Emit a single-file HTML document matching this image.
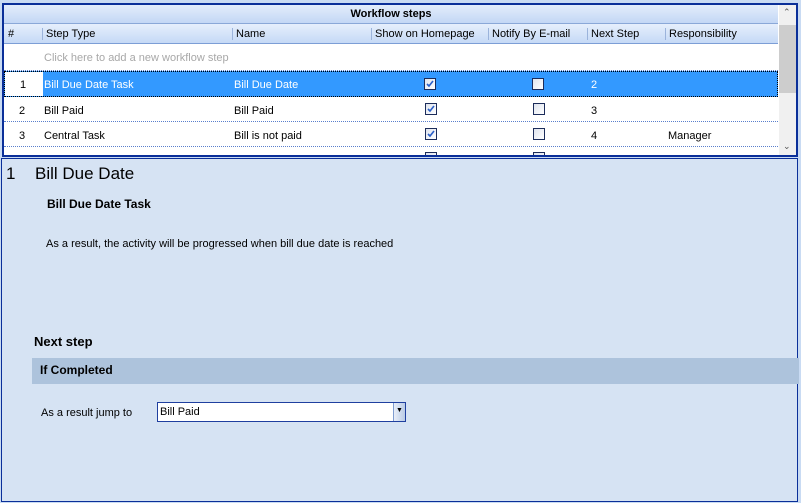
<!DOCTYPE html>
<html><head><style>
*{margin:0;padding:0;box-sizing:border-box}
body{width:801px;height:503px;background:#c9dbf3;font-family:"Liberation Sans",Arial,sans-serif;font-size:11px;color:#000;position:relative;overflow:hidden}
.a{position:absolute;white-space:nowrap}
.grid{position:absolute;left:2px;top:3px;width:796px;height:154px;border:2px solid #0a2f99;background:#fff;overflow:hidden}
.title{position:absolute;left:0;top:0;width:774px;height:19px;background:linear-gradient(#e3edfb,#c3d7f5);border-bottom:1px solid #8aa8d8;font-weight:bold;text-align:center;line-height:19px}
.hdr{position:absolute;left:0;top:19px;width:774px;height:20px;background:linear-gradient(#e6effc,#c5d9f6);border-bottom:1px solid #7c9ed6}
.hdr span{position:absolute;top:4px;padding-left:3px;border-left:1px solid #9bb3db}
.row{position:absolute;left:0;width:774px;border-bottom:1px dotted #5a7fcc}
.row span{position:absolute}
.cb{position:absolute;width:12px;height:12px;border:1px solid #1c2c5a;background:linear-gradient(135deg,#dfe4ee,#fff)}
.sb{position:absolute;left:775px;top:0;width:17px;height:150px;background:#f0f0f0}
.panel{position:absolute;left:1px;top:158px;width:797px;height:344px;border:1px solid #0a2f99;background:#d6e3f3}
</style></head><body>
<div class="grid">
 <div class="title">Workflow steps</div>
 <div class="hdr">
  <span style="left:1px;border:none">#</span>
  <span style="left:38px">Step Type</span>
  <span style="left:228px">Name</span>
  <span style="left:367px">Show on Homepage</span>
  <span style="left:484px">Notify By E-mail</span>
  <span style="left:583px">Next Step</span>
  <span style="left:661px">Responsibility</span>
 </div>
 <div class="row" style="top:40px;height:26px"><span style="left:40px;top:7px;color:#a8a8a8">Click here to add a new workflow step</span></div>
 <div class="row" style="top:66px;height:26px;background:#3399ff;border:1px dotted #000">
  <div style="position:absolute;left:0;top:0;width:38px;height:24px;background:#fff"></div>
  <span style="left:15px;top:7px">1</span>
  <span style="left:39px;top:7px;color:#fff">Bill Due Date Task</span>
  <span style="left:229px;top:7px;color:#fff">Bill Due Date</span>
  <div class="cb" style="left:419px;top:6px"><svg width="10" height="10"><path d="M2 5l2 2 4-5" stroke="#2a5fc8" stroke-width="1.6" fill="none"/></svg></div>
  <div class="cb" style="left:527px;top:6px"></div>
  <span style="left:586px;top:7px;color:#fff">2</span>
 </div>
 <div class="row" style="top:92px;height:25px">
  <span style="left:15px;top:8px">2</span><span style="left:40px;top:8px">Bill Paid</span><span style="left:230px;top:8px">Bill Paid</span>
  <div class="cb" style="left:421px;top:6px"><svg width="10" height="10"><path d="M2 5l2 2 4-5" stroke="#2a5fc8" stroke-width="1.6" fill="none"/></svg></div>
  <div class="cb" style="left:529px;top:6px"></div>
  <span style="left:587px;top:8px">3</span>
 </div>
 <div class="row" style="top:117px;height:25px">
  <span style="left:15px;top:8px">3</span><span style="left:40px;top:8px">Central Task</span><span style="left:230px;top:8px">Bill is not paid</span>
  <div class="cb" style="left:421px;top:6px"><svg width="10" height="10"><path d="M2 5l2 2 4-5" stroke="#2a5fc8" stroke-width="1.6" fill="none"/></svg></div>
  <div class="cb" style="left:529px;top:6px"></div>
  <span style="left:587px;top:8px">4</span><span style="left:664px;top:8px">Manager</span>
 </div>
 <div class="cb" style="left:421px;top:147px"></div><div class="cb" style="left:529px;top:147px"></div>
 <div class="sb">
  <div style="position:absolute;left:0;top:20px;width:17px;height:68px;background:#cdcdcd"></div>
  <div class="a" style="left:4px;top:2px;font-size:9px;color:#555">&#8963;</div>
  <div class="a" style="left:4px;top:136px;font-size:9px;color:#555">&#8964;</div>
 </div>
</div>
<div class="panel">
 <div class="a" style="left:4px;top:5px;font-size:17px">1</div>
 <div class="a" style="left:33px;top:5px;font-size:17px">Bill Due Date</div>
 <div class="a" style="left:45px;top:38px;font-size:12px;font-weight:bold">Bill Due Date Task</div>
 <div class="a" style="left:44px;top:79px">As a result, the activity will be progressed when bill due date is reached</div>
 <div class="a" style="left:32px;top:175px;font-size:13px;font-weight:bold">Next step</div>
 <div style="position:absolute;left:30px;top:199px;width:767px;height:26px;background:#adc3dc"></div>
 <div class="a" style="left:38px;top:204px;font-size:12px;font-weight:bold">If Completed</div>
 <div class="a" style="left:39px;top:248px">As a result jump to</div>
 <div style="position:absolute;left:155px;top:243px;width:249px;height:20px;border:1px solid #1f3f9f;background:#fff">
  <span class="a" style="left:2px;top:3px">Bill Paid</span>
  <div style="position:absolute;right:0;top:0;width:12px;height:18px;background:linear-gradient(90deg,#e8eef8,#b9cbe6);border-left:1px solid #7f9dd0;font-size:7px;text-align:center;line-height:16px">&#9660;</div>
 </div>
</div>
</body></html>
